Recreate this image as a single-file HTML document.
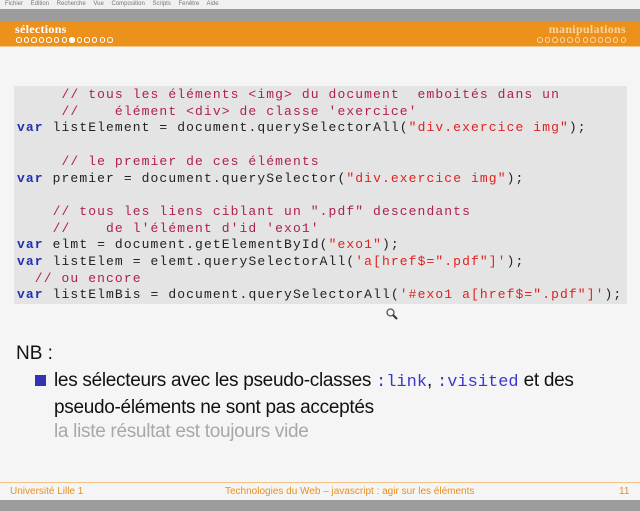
<!DOCTYPE html>
<html><head><meta charset="utf-8"><style>
*{margin:0;padding:0;box-sizing:border-box}
body{width:640px;height:511px;overflow:hidden;background:#f5f5f5;position:relative;font-family:"Liberation Sans",sans-serif}
.menu{position:absolute;top:0;left:0;width:640px;height:9px;background:#f0f0f0;font-size:6px;color:#777;padding-left:5px;line-height:9px;word-spacing:6px}
.gray{position:absolute;top:9px;left:0;width:640px;height:12px;background:#9c9c9c}
.or{position:absolute;top:21px;left:0;width:640px;height:26px;background:#ec911c;border-bottom:1px solid #f5c888}
.t1{position:absolute;left:15px;top:1px;color:#fff;font-family:"Liberation Serif",serif;font-weight:bold;font-size:12px;letter-spacing:.3px}
.t2{position:absolute;right:14px;top:1px;color:#f8d3a0;font-family:"Liberation Serif",serif;font-weight:bold;font-size:12px;letter-spacing:.3px}
.dots{position:absolute;top:16px;display:flex;gap:2.1px}
.dots i{display:block;width:5.5px;height:5.5px;border:1px solid #fff;border-radius:50%}
.dots i.f{background:#fff}
.dots.r i{border-color:#f8d3a0}
.code{position:absolute;left:14px;top:86px;width:613px;height:218px;background:#e4e4e4}
pre{position:absolute;left:17px;top:87px;font-family:"Liberation Mono",monospace;font-size:13px;letter-spacing:1.1px;line-height:16.7px;color:#222}
.c{color:#b0204a}.k{color:#2030b0;font-weight:bold}.s{color:#e02020}
.nb{position:absolute;left:16px;top:343px;font-size:19px;color:#111}
.bl{position:absolute;left:35px;top:375px;width:11px;height:11px;background:#3333b0}
.txt{position:absolute;left:54px;top:369px;font-size:19px;line-height:24.5px;color:#111;letter-spacing:-.3px}
.txt .m{font-family:"Liberation Mono",monospace;color:#3838d0;font-size:17px;letter-spacing:0}
.g{color:#a8a8a8}
.fl{position:absolute;top:482px;left:0;width:640px;height:1px;background:#f3c48a}
.ft{position:absolute;top:486px;font-size:10px;color:#e8901c}
.bot{position:absolute;top:500px;left:0;width:640px;height:11px;background:#9c9c9c}
</style></head><body>
<div class="menu">Fichier Édition Recherche Vue Composition Scripts Fenêtre Aide</div>
<div class="gray"></div>
<div class="or"><div class="t1">sélections</div>
<div class="dots" style="left:16px"><i></i><i></i><i></i><i></i><i></i><i></i><i></i><i class="f"></i><i></i><i></i><i></i><i></i><i></i></div>
<div class="t2">manipulations</div>
<div class="dots r" style="left:537px"><i></i><i></i><i></i><i></i><i></i><i></i><i></i><i></i><i></i><i></i><i></i><i></i></div></div>
<div class="code"></div>
<pre><span class="c">     // tous les éléments &lt;img&gt; du document  emboités dans un
     //    élément &lt;div&gt; de classe 'exercice'</span>
<span class="k">var</span> listElement = document.querySelectorAll(<span class="s">"div.exercice img"</span>);

<span class="c">     // le premier de ces éléments</span>
<span class="k">var</span> premier = document.querySelector(<span class="s">"div.exercice img"</span>);

<span class="c">    // tous les liens ciblant un ".pdf" descendants
    //    de l'élément d'id 'exo1'</span>
<span class="k">var</span> elmt = document.getElementById(<span class="s">"exo1"</span>);
<span class="k">var</span> listElem = elemt.querySelectorAll(<span class="s">'a[href$=".pdf"]'</span>);
<span class="c">  // ou encore</span>
<span class="k">var</span> listElmBis = document.querySelectorAll(<span class="s">'#exo1 a[href$=".pdf"]'</span>);</pre>
<svg style="position:absolute;left:385px;top:307px" width="14" height="14"><circle cx="5.5" cy="5.5" r="3.5" fill="none" stroke="#555" stroke-width="1.3"/><line x1="8" y1="8" x2="12" y2="12" stroke="#333" stroke-width="2"/></svg>
<div class="nb">NB :</div>
<div class="bl"></div>
<div class="txt">les sélecteurs avec les pseudo-classes <span class="m">:link</span>, <span class="m">:visited</span> et des<br>pseudo-éléments ne sont pas acceptés<br><span class="g">la liste résultat est toujours vide</span></div>
<div class="fl"></div>
<div class="ft" style="left:10px">Université Lille 1</div>
<div class="ft" style="left:225px">Technologies du Web – javascript : agir sur les éléments</div>
<div class="ft" style="left:619px">11</div>
<div class="bot"></div>
</body></html>
